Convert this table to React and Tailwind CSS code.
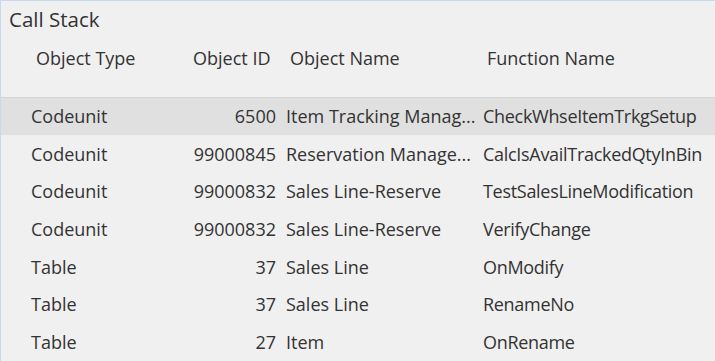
import React from "react";

const rows = [
  ["Codeunit", "6500", "Item Tracking Manag...", "CheckWhseItemTrkgSetup", true],
  ["Codeunit", "99000845", "Reservation Manage...", "CalcIsAvailTrackedQtyInBin"],
  ["Codeunit", "99000832", "Sales Line-Reserve", "TestSalesLineModification"],
  ["Codeunit", "99000832", "Sales Line-Reserve", "VerifyChange"],
  ["Table", "37", "Sales Line", "OnModify"],
  ["Table", "37", "Sales Line", "RenameNo"],
  ["Table", "27", "Item", "OnRename"],
];

export default function App() {
  return (
    <div
      className="w-[715px] h-[361px] overflow-hidden bg-[#f0f0f0] border-t border-l border-[#c8d8f0] text-[#333333] text-[18px] leading-none flex flex-col"
      style={{ fontFamily: '"Open Sans", "Noto Sans", sans-serif' }}
    >
      <div className="h-[37px] pl-[8px] flex items-center text-[20.5px]">Call Stack</div>
      <div className="h-[39px] pl-[35px] flex items-center">
        <div className="w-[157px]">Object Type</div>
        <div className="w-[97px]">Object ID</div>
        <div className="w-[197px]">Object Name</div>
        <div>Function Name</div>
      </div>
      <div className="h-[20px]" />
      {rows.map((r, i) => (
        <div
          key={i}
          className={`h-[37.7px] shrink-0 pl-[30px] flex items-center whitespace-nowrap ${
            r[4] ? "bg-[#e0e0e0] border-t border-[#d4d4d4]" : ""
          }`}
        >
          <div className="w-[125px]">{r[0]}</div>
          <div className="w-[120px] text-right">{r[1]}</div>
          <div className="w-[207px] pl-[10px]">{r[2]}</div>
          <div className="tracking-[-0.3px]">{r[3]}</div>
        </div>
      ))}
    </div>
  );
}
